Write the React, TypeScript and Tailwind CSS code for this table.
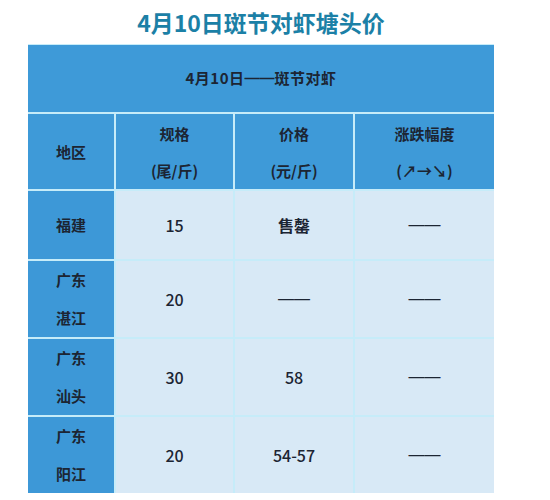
const rows = [
  { region: ["福建"], spec: "15", price: "售罄", priceBold: true, change: "——", h: "h-[68px]" },
  { region: ["广东", "湛江"], spec: "20", price: "——", priceBold: false, change: "——", h: "h-[76px]" },
  { region: ["广东", "汕头"], spec: "30", price: "58", priceBold: false, change: "——", h: "h-[76px]" },
  { region: ["广东", "阳江"], spec: "20", price: "54-57", priceBold: false, change: "——", h: "h-[76px]" },
];

export default function App() {
  return (
    <div className="h-[500px] w-[550px] bg-white font-['Noto_Sans_CJK_SC',sans-serif] text-[#1c2533]">
      <h1 className="flex h-[44px] items-center justify-center pr-[28px] text-[23px] font-bold text-[#1b80a6]">
        4月10日斑节对虾塘头价
      </h1>
      <div className="ml-[28px] grid w-[466px] grid-cols-[86px_117px_118px_139px] gap-[2px] border-t border-[#c6ecf9] bg-[#c6ecf9]">
        <div className="col-span-4 flex h-[67px] items-center justify-center bg-[#3e9ad8] text-[15px] font-bold tracking-[0.5px]">
          4月10日<span className="font-['Liberation_Sans'] tracking-normal">——</span>斑节对虾
        </div>

        <HeadCell lines={["地区"]} />
        <HeadCell lines={["规格", "(尾/斤)"]} />
        <HeadCell lines={["价格", "(元/斤)"]} />
        <HeadCell lines={["涨跌幅度", "(↗→↘)"]} />

        {rows.map((r, i) => (
          <Row key={i} {...r} />
        ))}
      </div>
    </div>
  );
}

const HeadCell = ({ lines }: { lines: string[] }) => {
  return (
    <div className="flex h-[75px] flex-col items-center justify-center bg-[#3e9ad8] text-[15px] font-bold leading-[37px]">
      {lines.map((l, i) => (
        <span key={i}>{l}</span>
      ))}
    </div>
  );
};

interface RowProps {
  region: string[];
  spec: string;
  price: string;
  priceBold: boolean;
  change: string;
  h: string;
}

const Cell = ({ h, bold, children }: { h: string; bold?: boolean; children: string }) => {
  const isDash = children === "——";
  return (
    <div
      className={`${h} flex items-center justify-center bg-[#d8e9f6] text-[16px] ${bold ? "font-bold" : "font-medium"} ${
        isDash ? "font-['Liberation_Sans'] font-bold" : ""
      }`}
    >
      {children}
    </div>
  );
};

const Row = ({ region, spec, price, priceBold, change, h }: RowProps) => {
  return (
    <>
      <div className={`${h} flex flex-col items-center justify-center bg-[#3d98d7] text-[15px] font-bold leading-[38px]`}>
        {region.map((l, i) => (
          <span key={i}>{l}</span>
        ))}
      </div>
      <Cell h={h}>{spec}</Cell>
      <Cell h={h} bold={priceBold}>
        {price}
      </Cell>
      <Cell h={h}>{change}</Cell>
    </>
  );
};
